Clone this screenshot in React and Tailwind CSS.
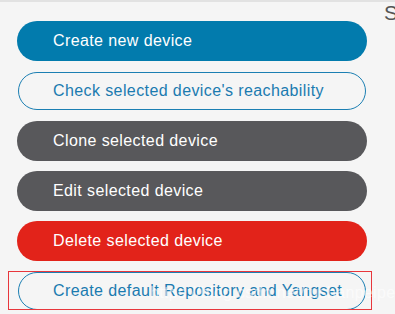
import React from "react";

const buttons = [
  { label: "Create new device", kind: "primary" },
  { label: "Check selected device's reachability", kind: "outline" },
  { label: "Clone selected device", kind: "dark" },
  { label: "Edit selected device", kind: "dark" },
  { label: "Delete selected device", kind: "danger" },
  { label: "Create default Repository and Yangset", kind: "outline", marked: true },
];

const styles = {
  primary: "h-[40px] w-[350px] pl-[36px] bg-[#027bad] text-white",
  dark: "h-[40px] w-[350px] pl-[36px] bg-[#58585b] text-white",
  danger: "h-[40px] w-[350px] pl-[36px] bg-[#e2231a] text-white",
  outline: "h-[38px] my-px ml-px w-[348px] pl-[34px] border border-[#1b7fb3] bg-[#f5f5f5] text-[#1b7bb0]",
};

const DeviceButton = ({ label, kind }) => (
  <button className={`${styles[kind]} block rounded-full text-left text-[16px] tracking-[0.025em]`}>
    {label}
  </button>
);

export default function App() {
  return (
    <div
      className="relative h-[314px] w-[395px] overflow-hidden bg-[#f5f5f5]"
      style={{ fontFamily: '"Liberation Sans", Arial, sans-serif' }}
    >
      <div className="h-[2px] bg-[#e2e2e2]" />
      <div className="flex">
        <div className="flex w-[384px] shrink-0 flex-col gap-[10px] pl-[17px] pt-[19px]">
          {buttons.map((b) => (
            <div key={b.label} className="relative">
              <DeviceButton label={b.label} kind={b.kind} />
              {b.marked && (
                <div className="pointer-events-none absolute left-[-9px] top-0 h-[39px] w-[364px] border border-[#e8373c]" />
              )}
            </div>
          ))}
        </div>
        <div className="shrink-0 text-[21px] leading-none text-[#555]">Select</div>
      </div>
      <div className="pointer-events-none absolute left-[150px] top-[281px] text-[16px] tracking-[0.02em] text-white/60">
        https://blog.csdn.net/tushanpeipei
      </div>
    </div>
  );
}
